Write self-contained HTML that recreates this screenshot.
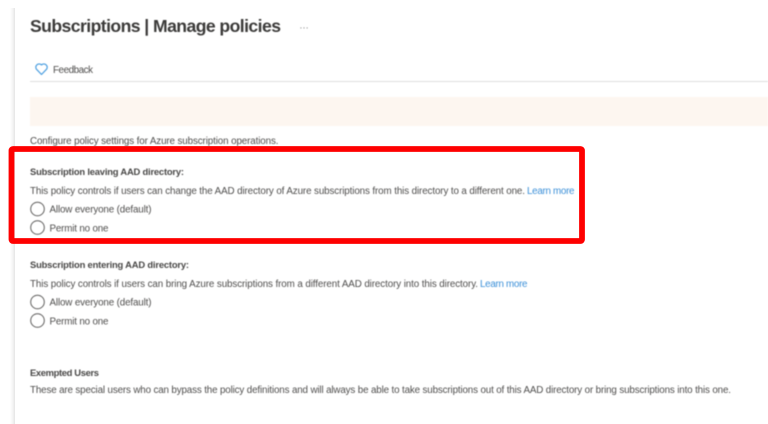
<!DOCTYPE html>
<html lang="en">
<head>
<meta charset="utf-8">
<title>Subscriptions | Manage policies</title>
<style>
html,body{margin:0;padding:0;width:768px;height:424px;overflow:hidden;background:#fff}
#stage{position:absolute;left:0;top:0;width:768px;height:424px;overflow:hidden;background:#fff}
#shadow{position:absolute;left:0;top:8px;width:15px;height:416px;background:linear-gradient(90deg,#fff 0,#fff 10px,#f3f3f3 13px,#e4e4e4 15px)}
svg{position:absolute;left:0;top:0}
#blur{filter:blur(.45px)}
text{font-family:"Liberation Sans",sans-serif;font-size:9.8px;fill:#4f4e4d}
.b{font-weight:700;fill:#484746;font-size:9.4px}
.l{fill:#3a8fd8}
circle{fill:none;stroke:#5f5e5d;stroke-width:1}
</style>
</head>
<body>
<div id="stage">
<div id="shadow"></div>
<svg width="768" height="424" viewBox="0 0 768 424">
<g id="blur">
<text x="30" y="32" textLength="251" style="font-size:17.6px;font-weight:700;fill:#3b3a39">Subscriptions | Manage policies</text>
<text x="299.500" y="28.500" textLength="9" style="font-size:10px;fill:#888">...</text>
<path d="M41.500 74.500 36.800 69.600a3.300 3.300 0 0 1 0-4.700 3.400 3.400 0 0 1 4.700 0 3.400 3.400 0 0 1 4.700 0 3.300 3.300 0 0 1 0 4.700Z" fill="none" stroke="#4a9ee0" stroke-width="1.200" stroke-linejoin="round"/>
<text x="53" y="73" textLength="40">Feedback</text>
<rect x="30" y="81" width="738" height="1" fill="#dfdfdf"/>
<rect x="30" y="97" width="738" height="29" fill="#fdf6f0"/>
<text x="30" y="144" textLength="248.500">Configure policy settings for Azure subscription operations.</text>

<text class="b" x="30" y="175" textLength="154">Subscription leaving AAD directory:</text>
<text x="30" y="194" textLength="495">This policy controls if users can change the AAD directory of Azure subscriptions from this directory to a different one.</text>
<text class="l" x="527" y="194" textLength="47.500">Learn more</text>
<circle cx="37.500" cy="209" r="6.800"/>
<text x="49.500" y="212.500" textLength="102">Allow everyone (default)</text>
<circle cx="37.500" cy="227.500" r="6.800"/>
<text x="49.500" y="231.500" textLength="59">Permit no one</text>

<text class="b" x="30" y="268" textLength="159">Subscription entering AAD directory:</text>
<text x="30" y="287" textLength="448">This policy controls if users can bring Azure subscriptions from a different AAD directory into this directory.</text>
<text class="l" x="480" y="287" textLength="47.500">Learn more</text>
<circle cx="37.500" cy="302" r="6.800"/>
<text x="49.500" y="305.500" textLength="102">Allow everyone (default)</text>
<circle cx="37.500" cy="320.500" r="6.800"/>
<text x="49.500" y="324.500" textLength="59">Permit no one</text>

<text class="b" x="30" y="376" textLength="69">Exempted Users</text>
<text x="30" y="393" textLength="701">These are special users who can bypass the policy definitions and will always be able to take subscriptions out of this AAD directory or bring subscriptions into this one.</text>
</g>
<rect x="11.500" y="149" width="570.500" height="92" rx="1.500" fill="none" stroke="#fe0000" stroke-width="5.800"/>
</svg>
</div>
</body>
</html>
